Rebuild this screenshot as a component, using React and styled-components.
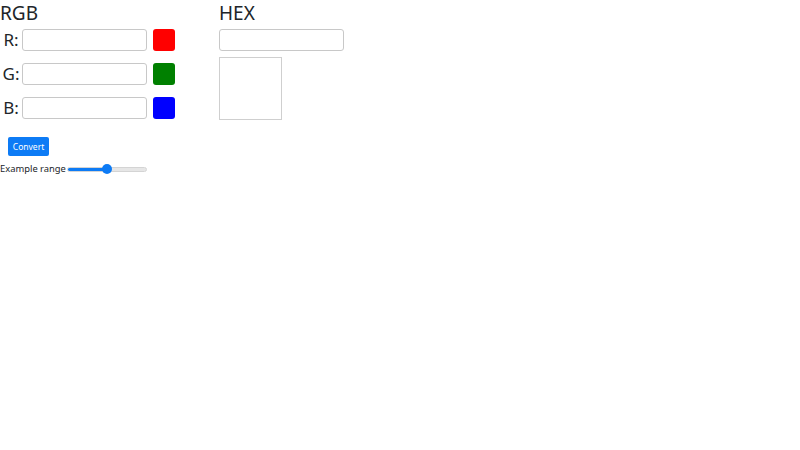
import React from "react";
import styled, { createGlobalStyle } from "styled-components";

const Global = createGlobalStyle`
  body {
    margin: 0;
    background: #fff;
    font-family: "Noto Sans", "Open Sans", sans-serif;
    color: #212529;
  }
`;

export default function App() {
  const [range, setRange] = React.useState(50);
  const channels = [
    { name: "R", color: "#ff0000" },
    { name: "G", color: "#008000" },
    { name: "B", color: "#0000ff" },
  ];
  return (
    <>
      <Global />
      <Columns>
        <Column width={219}>
          <Heading>RGB</Heading>
          {channels.map((c) => (
            <Row key={c.name}>
              <Label>{c.name}:</Label>
              <TextInput type="text" />
              <Swatch color={c.color} />
            </Row>
          ))}
        </Column>
        <Column>
          <Heading>HEX</Heading>
          <HexRow>
            <TextInput type="text" />
          </HexRow>
          <Preview />
        </Column>
      </Columns>
      <ConvertButton>Convert</ConvertButton>
      <RangeRow>
        <span>Example range</span>
        <Range
          type="range"
          min="0"
          max="100"
          value={range}
          style={{
            background: `linear-gradient(to right, #0d7bf5 ${range}%, #e6e6e6 ${range}%)`,
          }}
          onChange={(e) => setRange(e.target.value)}
        />
      </RangeRow>
    </>
  );
}

const Columns = styled.div`
  display: flex;
`;

const Column = styled.div`
  width: ${(p) => (p.width ? p.width + "px" : "auto")};
  display: flex;
  flex-direction: column;
`;

const Heading = styled.div`
  font-size: 19px;
  line-height: 26px;
  height: 29px;
`;

const Row = styled.div`
  display: flex;
  align-items: flex-start;
  height: 34px;
`;

const Label = styled.div`
  width: 22px;
  text-align: center;
  font-size: 17px;
  line-height: 22px;
`;

const TextInput = styled.input`
  box-sizing: border-box;
  width: 125px;
  height: 22px;
  border: 1px solid #c8c8c8;
  border-radius: 3px;
  padding: 0 4px;
  margin: 0;
  background: #fff;
  outline: none;
`;

const Swatch = styled.div`
  width: 22px;
  height: 22px;
  border-radius: 3px;
  margin-left: 6px;
  background: ${(p) => p.color};
`;

const HexRow = styled.div`
  display: flex;
  height: 28px;
`;

const Preview = styled.div`
  box-sizing: border-box;
  width: 63px;
  height: 63px;
  border: 1px solid #cfcfcf;
`;

const ConvertButton = styled.button`
  display: block;
  margin: 6px 0 0 8px;
  width: 41px;
  height: 19px;
  padding: 0;
  border: none;
  border-radius: 2px;
  background: #0d7bf5;
  color: #fff;
  font-family: "Noto Sans", "Open Sans", sans-serif;
  font-size: 8.5px;
`;

const RangeRow = styled.div`
  display: flex;
  align-items: center;
  margin-top: 5px;
  font-size: 9.4px;
  line-height: 16px;
`;

const Range = styled.input`
  -webkit-appearance: none;
  appearance: none;
  width: 80px;
  height: 5px;
  margin: 0 0 0 1px;
  border-radius: 3px;
  border: 1px solid #d4d4d4;
  box-sizing: border-box;
  outline: none;

  &::-webkit-slider-thumb {
    -webkit-appearance: none;
    width: 10px;
    height: 10px;
    border-radius: 50%;
    background: #0d7bf5;
    border: none;
  }
`;
